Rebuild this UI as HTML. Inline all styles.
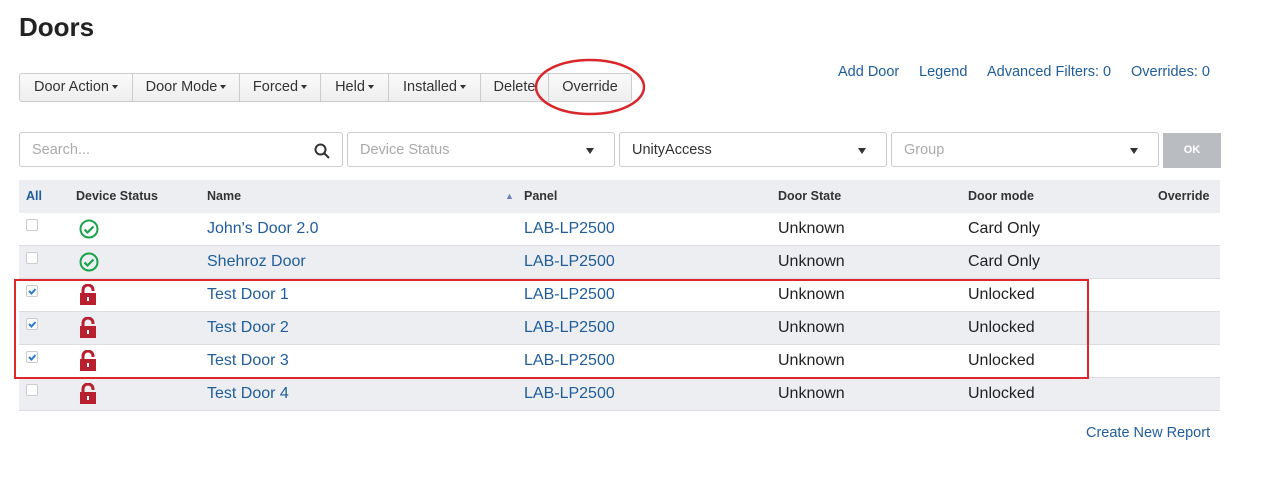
<html><head><style>
body{margin:0;width:1266px;height:497px;background:#fff;font-family:"Liberation Sans",sans-serif;position:relative;overflow:hidden;color:#222}
.a{position:absolute}
h1{position:absolute;left:19px;top:12px;margin:0;font-size:26px;font-weight:bold;color:#222}
.tb{position:absolute;left:19px;top:73px;height:27px;display:flex;border:1px solid #ccc;border-radius:3px;background:linear-gradient(#fafafa,#eee)}
.tb div{font-size:14.5px;line-height:27px;border-right:1px solid #ccc;color:#333;white-space:nowrap;text-align:center;box-sizing:border-box}
.tb div:last-child{border-right:none}
.car{display:inline-block;border-left:3.5px solid transparent;border-right:3.5px solid transparent;border-top:4px solid #333;vertical-align:middle;margin-left:3px}
.lk{position:absolute;top:64px;font-size:14.5px;color:#1f5d9c}
.f{position:absolute;top:132px;height:35px;border:1px solid #ccc;border-radius:3px;font-size:14.5px;line-height:35px;box-sizing:border-box;padding-left:12px;color:#aaa}
.dd{position:absolute;right:20px;top:15px;border-left:4.5px solid transparent;border-right:4.5px solid transparent;border-top:6px solid #333}
.row{position:absolute;left:19px;width:1201px;height:33px;border-bottom:1px solid #dcdde0;box-sizing:border-box;font-size:16px;line-height:32px}
.row span{position:absolute}
.g{background:#eceef2}
.bl{color:#1f5d9c}
.cb{position:absolute;left:7px;top:8px;width:12px;height:12px;border:1px solid #ccc;border-radius:2px;background:#fff;box-sizing:border-box}
.hd{font-size:12.5px;font-weight:bold;color:#333}
</style></head><body>
<h1>Doors</h1>
<div class="tb"><div style="width:113px">Door Action<span class="car"></span></div><div style="width:107px">Door Mode<span class="car"></span></div><div style="width:81px">Forced<span class="car"></span></div><div style="width:68px">Held<span class="car"></span></div><div style="width:92px">Installed<span class="car"></span></div><div style="width:68px">Delete</div><div style="width:82px">Override</div></div>
<svg class="a" style="left:533px;top:57px" width="114" height="60"><ellipse cx="57" cy="30" rx="54" ry="27" fill="none" stroke="#d9262b" stroke-width="2.5"/></svg>
<span class="lk" style="left:838px">Add Door</span><span class="lk" style="left:919px">Legend</span><span class="lk" style="left:987px">Advanced Filters: 0</span><span class="lk" style="left:1131px">Overrides: 0</span>
<div class="f" style="left:19px;width:324px">Search...<svg class="a" style="right:12px;top:10px" width="16" height="16"><circle cx="6.5" cy="6.5" r="5" fill="none" stroke="#333" stroke-width="2"/><line x1="10" y1="10" x2="15" y2="15" stroke="#333" stroke-width="2"/></svg></div>
<div class="f" style="left:347px;width:268px">Device Status<div class="dd"></div></div>
<div class="f" style="left:619px;width:268px;color:#333">UnityAccess<div class="dd"></div></div>
<div class="f" style="left:891px;width:268px">Group<div class="dd"></div></div>
<div class="a" style="left:1163px;top:133px;width:58px;height:35px;background:#b9bcc1;color:#fff;font-size:11px;font-weight:bold;text-align:center;line-height:35px">OK</div>
<div class="row g hd" style="top:180px;height:33px;border:none"><span style="left:7px;color:#1f5d9c">All</span><span style="left:57px">Device Status</span><span style="left:188px">Name</span><span style="left:486px;color:#6b7fc0;font-size:9px">▲</span><span style="left:505px">Panel</span><span style="left:759px">Door State</span><span style="left:949px">Door mode</span><span style="left:1139px">Override</span></div>
<div id="rows"></div>
<script>
var d=[["John's Door 2.0","Card Only",0,0],["Shehroz Door","Card Only",0,0],["Test Door 1","Unlocked",1,1],["Test Door 2","Unlocked",1,1],["Test Door 3","Unlocked",1,1],["Test Door 4","Unlocked",1,0]];
var ok='<svg class="a" style="left:60px;top:6px" width="20" height="20"><circle cx="10" cy="10" r="8.5" fill="none" stroke="#1aa34a" stroke-width="2"/><path d="M5.5 10.5l3 3 6-6" fill="none" stroke="#1aa34a" stroke-width="2.2"/></svg>';
var lk='<svg class="a" style="left:60px;top:5px" width="18" height="21"><path d="M4 10V6a5 5 0 0 1 10 0v1" fill="none" stroke="#b8202f" stroke-width="3"/><rect x="1" y="9" width="16" height="12" fill="#b8202f"/><rect x="8" y="13" width="2" height="4" fill="#fff"/></svg>';
var h='';d.forEach(function(r,i){h+='<div class="row'+(i%2?' g':'')+'" style="top:'+(213+i*33)+'px"><div class="cb" style="top:6px">'+(r[3]?'<svg width="10" height="10" style="position:absolute;left:0;top:0"><path d="M2 5l2.5 2.5L8.5 3" fill="none" stroke="#2a7ad8" stroke-width="2"/></svg>':'')+'</div>'+(r[2]?lk:ok)+'<span class="bl" style="left:188px">'+r[0]+'</span><span class="bl" style="left:505px">LAB-LP2500</span><span style="left:759px">Unknown</span><span style="left:949px">'+r[1]+'</span></div>'});
document.getElementById('rows').innerHTML=h;
</script>
<div class="a" style="left:14px;top:279px;width:1071px;height:96px;border:2px solid #e0262b"></div>
<span class="lk" style="left:1086px;top:425px">Create New Report</span>
</body></html>
